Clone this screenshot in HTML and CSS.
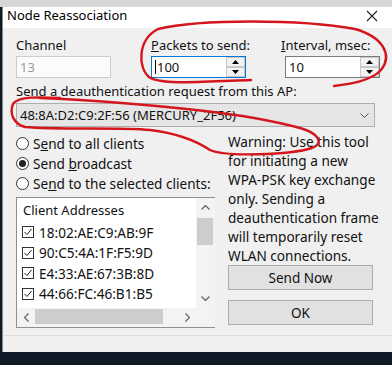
FILE: index.html
```html
<!DOCTYPE html>
<html>
<head>
<meta charset="utf-8">
<link rel="stylesheet" href="styles.css">
</head>
<body>
<div class="screen">
  <div class="bg-strip"></div>
  <div class="dialog">
    <div class="titlebar">
      <span class="title">Node Reassociation</span>
      <svg class="close" width="12" height="12" viewBox="0 0 12 12"><path d="M1 1 L11 11 M11 1 L1 11" stroke="#222" stroke-width="1.1" fill="none"/></svg>
    </div>
    <div class="content">
      <div class="top-row">
        <div class="field">
          <div class="lbl">Channel</div>
          <div class="input disabled">13</div>
        </div>
        <div class="field">
          <div class="lbl"><u>P</u>ackets to send:</div>
          <div class="input focused">
            <span class="value"><span class="caret"></span>100</span>
            <div class="spin">
              <div class="spin-btn"><svg width="7" height="4" viewBox="0 0 7 4"><path d="M0 4 L3.5 0 L7 4 Z" fill="#000"/></svg></div>
              <div class="spin-btn"><svg width="7" height="4" viewBox="0 0 7 4"><path d="M0 0 L3.5 4 L7 0 Z" fill="#000"/></svg></div>
            </div>
          </div>
        </div>
        <div class="field field-end">
          <div class="lbl"><u>I</u>nterval, msec:</div>
          <div class="input">
            <span class="value">10</span>
            <div class="spin">
              <div class="spin-btn"><svg width="7" height="4" viewBox="0 0 7 4"><path d="M0 4 L3.5 0 L7 4 Z" fill="#000"/></svg></div>
              <div class="spin-btn"><svg width="7" height="4" viewBox="0 0 7 4"><path d="M0 0 L3.5 4 L7 0 Z" fill="#000"/></svg></div>
            </div>
          </div>
        </div>
      </div>
      <div class="lbl ap-label">Send a deauthentication request from this AP:</div>
      <div class="select">
        <span>48:8A:D2:C9:2F:56 (MERCURY_2F56)</span>
        <svg width="9" height="5" viewBox="0 0 9 5"><path d="M0.5 0.5 L4.5 4.5 L8.5 0.5" stroke="#555" stroke-width="1" fill="none"/></svg>
      </div>
      <div class="lower">
        <div class="left">
          <div class="radio"><span class="circle"></span><span>S<u>e</u>nd to all clients</span></div>
          <div class="radio"><span class="circle checked"></span><span>Send <u>b</u>roadcast</span></div>
          <div class="radio"><span class="circle"></span><span>Se<u>n</u>d to the selected clients:</span></div>
          <div class="listbox">
            <div class="list-area">
              <div class="list-head">Client Addresses</div>
              <div class="row"><span class="check"><svg width="10" height="10" viewBox="0 0 10 10"><path d="M1.5 5 L4 7.5 L8.5 2" stroke="#222" stroke-width="1" fill="none"/></svg></span>18:02:AE:C9:AB:9F</div>
              <div class="row"><span class="check"><svg width="10" height="10" viewBox="0 0 10 10"><path d="M1.5 5 L4 7.5 L8.5 2" stroke="#222" stroke-width="1" fill="none"/></svg></span>90:C5:4A:1F:F5:9D</div>
              <div class="row"><span class="check"><svg width="10" height="10" viewBox="0 0 10 10"><path d="M1.5 5 L4 7.5 L8.5 2" stroke="#222" stroke-width="1" fill="none"/></svg></span>E4:33:AE:67:3B:8D</div>
              <div class="row"><span class="check"><svg width="10" height="10" viewBox="0 0 10 10"><path d="M1.5 5 L4 7.5 L8.5 2" stroke="#222" stroke-width="1" fill="none"/></svg></span>44:66:FC:46:B1:B5</div>
              <div class="row"><span class="check"></span></div>
            </div>
            <div class="vscroll">
              <div class="arrow"><svg width="9" height="5" viewBox="0 0 9 5"><path d="M0.5 4.5 L4.5 0.5 L8.5 4.5" stroke="#606060" stroke-width="1.2" fill="none"/></svg></div>
              <div class="vthumb"></div>
              <div class="track"></div>
              <div class="arrow"><svg width="9" height="5" viewBox="0 0 9 5"><path d="M0.5 0.5 L4.5 4.5 L8.5 0.5" stroke="#606060" stroke-width="1.2" fill="none"/></svg></div>
            </div>
            <div class="hscroll">
              <div class="arrow"><svg width="5" height="9" viewBox="0 0 5 9"><path d="M4.5 0.5 L0.5 4.5 L4.5 8.5" stroke="#606060" stroke-width="1.2" fill="none"/></svg></div>
              <div class="hthumb"></div>
              <div class="track"></div>
              <div class="arrow"><svg width="5" height="9" viewBox="0 0 5 9"><path d="M0.5 0.5 L4.5 4.5 L0.5 8.5" stroke="#606060" stroke-width="1.2" fill="none"/></svg></div>
            </div>
            <div class="corner"></div>
          </div>
        </div>
        <div class="right">
          <p class="warning">Warning: Use this tool<br>for initiating a new<br>WPA-PSK key exchange<br>only. Sending a<br>deauthentication frame<br>will temporarily reset<br>WLAN connections.</p>
          <button class="btn">Send Now</button>
          <button class="btn">OK</button>
        </div>
      </div>
    </div>
    <div class="status"></div>
  </div>
  <div class="taskbar"></div>
  <svg class="annot" width="392" height="365" viewBox="0 0 392 365">
    <path d="M251 80 C200 82 160 85 149 77 C138 68 137 40 158 29 C200 19 300 19 355 29 C383 37 393 55 381 70 C371 81 350 84 334 86" stroke="#d4161c" stroke-width="2.4" fill="none" stroke-linecap="round"/>
    <path d="M60 98 C40 97 18 96 13 104 C9 114 14 124 25 127 C60 130 120 127 150 130 C175 133 195 140 210 150 C225 157 290 155 312 148 C325 143 318 133 300 128 C270 120 240 115 205 111 C160 106 100 100 40 98" stroke="#d4161c" stroke-width="2.4" fill="none" stroke-linecap="round"/>
  </svg>
</div>
</body>
</html>
```

FILE: styles.css
```css
* { box-sizing: border-box; }
html, body { margin: 0; padding: 0; }
body {
  font-family: "Noto Sans", "Open Sans", sans-serif;
  font-size: 13px;
  color: #111;
  background: #0e1b26;
}
.screen {
  position: relative;
  width: 392px;
  height: 365px;
  overflow: hidden;
  display: flex;
  flex-direction: column;
  background: #0e1b26;
}
.bg-strip {
  height: 7px;
  background: #d6d6d6;
  flex: none;
}
.dialog {
  height: 345px;
  flex: none;
  margin-left: 2px;
  border-left: 1px solid #8a8a8a;
  background: #f0f0f0;
  display: flex;
  flex-direction: column;
}
.titlebar {
  height: 21px;
  flex: none;
  background: #ffffff;
  display: flex;
  justify-content: space-between;
  align-items: flex-start;
  padding: 0 14px 0 4px;
}
.title {
  font-size: 13px;
  line-height: 17px;
  color: #000;
}
.close { margin-top: 3px; }
.content {
  flex: 1;
  padding: 8px 0 0 13px;
}
.top-row {
  display: grid;
  grid-template-columns: 135px 130px 99px;
}
.field-end {
  display: flex;
  flex-direction: column;
  align-items: flex-end;
}
.field-end .lbl { align-self: flex-start; }
.lbl {
  line-height: 18px;
  height: 18px;
  white-space: nowrap;
}
.input {
  margin-top: 2px;
  width: 95px;
  height: 22px;
  border: 1px solid #7a7a7a;
  background: #fff;
  display: flex;
  align-items: center;
  justify-content: space-between;
  padding-left: 3px;
}
.input.disabled {
  border-color: #cccccc;
  background: #fbfbfb;
  color: #9a9a9a;
}
.input.focused { border-color: #0078d7; }
.value { display: flex; align-items: center; }
.caret {
  display: inline-block;
  width: 1px;
  height: 14px;
  background: #000;
  margin-right: 1px;
}
.spin {
  width: 19px;
  height: 20px;
  display: flex;
  flex-direction: column;
}
.spin-btn {
  flex: 1;
  border: 1px solid #c8c8c8;
  background: #f2f2f2;
  display: flex;
  align-items: center;
  justify-content: center;
}
.ap-label { margin-top: 4px; }
.select {
  margin-top: 3px;
  width: 359px;
  height: 24px;
  border: 1px solid #adadad;
  background: #e5e5e5;
  display: flex;
  align-items: center;
  justify-content: space-between;
  padding: 0 5px 0 3px;
}
.lower {
  display: grid;
  grid-template-columns: 199px 145px;
  column-gap: 13px;
}
.left { padding-top: 6px; }
.radio {
  height: 20px;
  display: flex;
  align-items: center;
  gap: 4px;
  white-space: nowrap;
  font-size: 13.6px;
}
.circle {
  width: 13px;
  height: 13px;
  border: 1px solid #333;
  border-radius: 50%;
  background: #fff;
  display: flex;
  align-items: center;
  justify-content: center;
  flex: none;
}
.circle.checked::after {
  content: "";
  width: 7px;
  height: 7px;
  border-radius: 50%;
  background: #222;
}
.listbox {
  margin-top: 4px;
  height: 131px;
  border: 1px solid #8f8f8f;
  background: #fff;
  display: grid;
  grid-template-columns: 179px 19px;
  grid-template-rows: 110px 19px;
}
.list-area {
  overflow: hidden;
  white-space: nowrap;
}
.list-head {
  height: 24px;
  line-height: 24px;
  padding-left: 6px;
}
.row {
  height: 20.5px;
  display: flex;
  align-items: center;
  padding-left: 5px;
  gap: 5px;
  font-size: 13.6px;
}
.check {
  width: 12px;
  height: 12px;
  border: 1px solid #333;
  background: #fff;
  display: flex;
  align-items: center;
  justify-content: center;
  flex: none;
}
.vscroll {
  background: #f3f3f3;
  display: flex;
  flex-direction: column;
}
.vscroll .arrow {
  height: 19px;
  display: flex;
  align-items: center;
  justify-content: center;
}
.vthumb {
  height: 27px;
  margin: 1px 2px 0 1px;
  background: #cdcdcd;
}
.track { flex: 1; }
.hscroll {
  background: #f3f3f3;
  display: flex;
}
.hscroll .arrow {
  width: 18px;
  display: flex;
  align-items: center;
  justify-content: center;
}
.hthumb {
  width: 128px;
  height: 15px;
  margin-top: 1px;
  background: #cdcdcd;
}
.corner { background: #f3f3f3; }
.right { padding-top: 5px; }
.warning {
  margin: 0;
  font-size: 13.6px;
  line-height: 19px;
  white-space: nowrap;
}
.btn {
  display: block;
  width: 145px;
  height: 25px;
  margin: 0 0 10px 0;
  border: 1px solid #adadad;
  background: #e1e1e1;
  font-family: inherit;
  font-size: 13.5px;
  color: #111;
  padding: 0;
}
.status {
  height: 19px;
  flex: none;
  border-top: 1px solid #dcdcdc;
  background: #f0f0f0;
}
.taskbar {
  flex: 1;
  background: #0e1b26;
}
.annot {
  position: absolute;
  left: 0;
  top: 0;
  pointer-events: none;
}
```
